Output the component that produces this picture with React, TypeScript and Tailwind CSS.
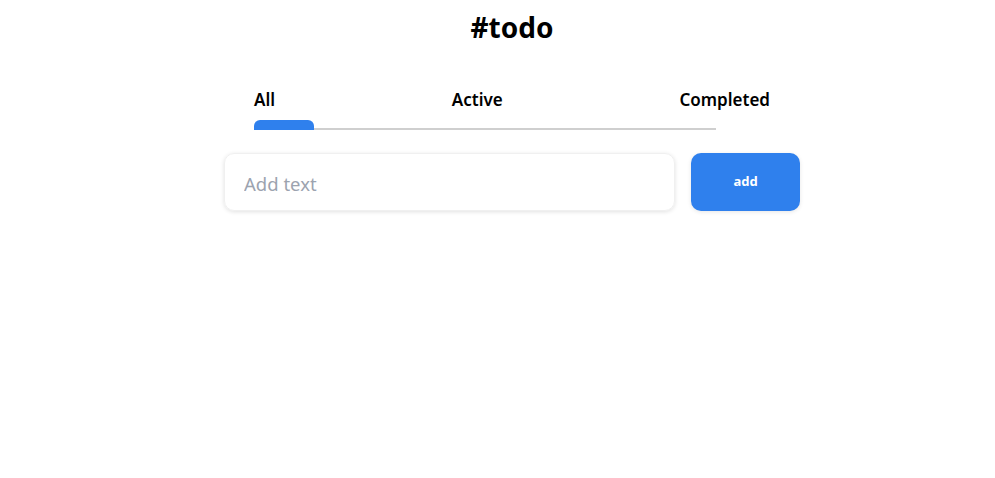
import {useState} from 'react';

const tabs = ['All', 'Active', 'Completed'];

export default function App() {
    const [active, setActive] = useState(0);
    const [text, setText] = useState('');

    return (
        <div className="w-full overflow-hidden bg-white h-[478px]" style={{fontFamily: '"Noto Sans", "Open Sans", sans-serif'}}>
            <div className="w-[1024px]">
                <div className="w-[576px] mx-auto flex flex-col">
                    <h1 className="text-center text-[28px] font-bold text-black leading-none pt-[13px]">#todo</h1>

                    <div className="mt-[50px] px-[30px]">
                        <div className="flex justify-between">
                            {tabs.map((tab, i) => (
                                <button
                                    key={tab}
                                    onClick={() => setActive(i)}
                                    className="text-[17px] font-semibold text-black leading-none"
                                >
                                    {tab}
                                </button>
                            ))}
                        </div>
                        <div className="relative mt-[12px] h-[10px] w-[462px]">
                            <div className="absolute bottom-0 left-0 right-0 h-[2px] bg-[#cfcfcf]"/>
                            <div
                                className="absolute bottom-0 h-[10px] w-[60px] rounded-t-[6px] bg-[#2f80ed]"
                                style={{left: active * 201}}
                            />
                        </div>
                    </div>

                    <div className="mt-[23px] flex gap-4">
                        <input
                            value={text}
                            onChange={(e) => setText(e.target.value)}
                            placeholder="Add text"
                            className="flex-1 h-[58px] rounded-[10px] border border-[#f0f0f0] pl-[19px] pr-5 pt-[2px] text-[18.5px] text-gray-800 placeholder:text-[#9ca3af] shadow-[0_1px_4px_rgba(0,0,0,0.12)] outline-none"
                        />
                        <button className="w-[109px] h-[58px] rounded-[10px] bg-[#2f80ed] text-white text-[13px] font-bold shadow-[0_1px_4px_rgba(0,0,0,0.1)]">
                            add
                        </button>
                    </div>
                </div>
            </div>
        </div>
    );
}
